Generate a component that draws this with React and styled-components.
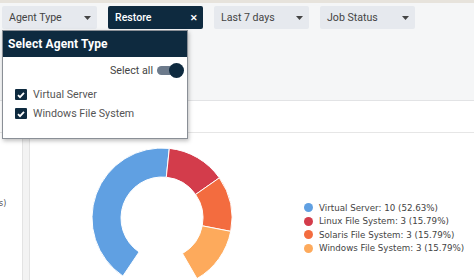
import React from 'react'
import styled, { createGlobalStyle } from 'styled-components'

const GlobalStyle = createGlobalStyle`
  html, body { margin: 0; padding: 0; background: #fff; }
  body { font-family: Roboto, "Liberation Sans", sans-serif; overflow: hidden; }
`

const agentTypes = ['Virtual Server', 'Windows File System']

const segments = [
  { label: 'Virtual Server', value: 10, pct: '52.63%', color: '#60a0e2', from: 214, to: 366 },
  { label: 'Linux File System', value: 3, pct: '15.79%', color: '#d33c4b', from: 6, to: 55 },
  { label: 'Solaris File System', value: 3, pct: '15.79%', color: '#f36c3f', from: 55, to: 101 },
  { label: 'Windows File System', value: 3, pct: '15.79%', color: '#fdaa5c', from: 101, to: 150 },
]

const pt = (cx, cy, r, deg) => {
  const a = (deg * Math.PI) / 180
  return [cx + r * Math.sin(a), cy - r * Math.cos(a)]
}

const arcPath = (cx, cy, r0, r1, a0, a1) => {
  const large = a1 - a0 > 180 ? 1 : 0
  const [x1, y1] = pt(cx, cy, r1, a0)
  const [x2, y2] = pt(cx, cy, r1, a1)
  const [x3, y3] = pt(cx, cy, r0, a1)
  const [x4, y4] = pt(cx, cy, r0, a0)
  return `M${x1} ${y1} A${r1} ${r1} 0 ${large} 1 ${x2} ${y2} L${x3} ${y3} A${r0} ${r0} 0 ${large} 0 ${x4} ${y4} Z`
}

const Caret = () => (
  <svg width="7" height="4" viewBox="0 0 7 4"><path d="M0 0h7L3.5 4z" fill="#444" /></svg>
)

const Check = () => (
  <svg width="10" height="10" viewBox="0 0 10 10">
    <path d="M2 5.2l2 2 4-4.4" stroke="#fff" strokeWidth="1.8" fill="none" />
  </svg>
)

const App = () => {
  return (
    <Page>
      <GlobalStyle />
      <TopStrip />
      <FilterBar>
        <Filter>Agent Type<Caret /></Filter>
        <Filter dark>Restore<Close>✕</Close></Filter>
        <Filter>Last 7 days<Caret /></Filter>
        <Filter>Job Status<Caret /></Filter>
      </FilterBar>
      <SubBar />
      <Content>
        <LeftCol>
          <Cut>s)</Cut>
        </LeftCol>
        <Gutter />
        <ChartArea>
          <svg width="150" height="150" viewBox="0 0 150 150">
            {segments.map((s) => (
              <path
                key={s.label}
                d={arcPath(75, 75, 41, 70, s.from, s.to)}
                fill={s.color}
                stroke="#fff"
                strokeWidth="1"
              />
            ))}
          </svg>
          <Legend>
            {segments.map((s) => (
              <LegendRow key={s.label}>
                <Dot color={s.color} />
                {s.label}: {s.value} ({s.pct})
              </LegendRow>
            ))}
          </Legend>
        </ChartArea>
      </Content>

      <Dropdown>
        <DropHeader>Select Agent Type</DropHeader>
        <DropBody>
          <SelectAll>
            Select all
            <Toggle><Knob /></Toggle>
          </SelectAll>
          {agentTypes.map((t) => (
            <Option key={t}>
              <Box><Check /></Box>
              {t}
            </Option>
          ))}
        </DropBody>
      </Dropdown>
    </Page>
  )
}

export default App

const Page = styled.div`
  position: relative;
  width: 474px;
  height: 280px;
  overflow: hidden;
`

const TopStrip = styled.div`
  height: 3px;
  background: #e7e3dc;
`

const FilterBar = styled.div`
  height: 94px;
  background: #f5f6f7;
  border-bottom: 1px solid #e2e3e5;
  display: flex;
  align-items: flex-start;
  gap: 11px;
  padding: 3px 2px 0;
`

const Filter = styled.div`
  width: 95px;
  height: 23px;
  box-sizing: border-box;
  border-radius: 2px;
  display: flex;
  align-items: center;
  justify-content: space-between;
  padding: 0 ${(p) => (p.dark ? 5 : 6)}px 0 7px;
  font-size: 10.6px;
  color: ${(p) => (p.dark ? '#fff' : '#444')};
  background: ${(p) => (p.dark ? '#0e2a3f' : '#e6e9ee')};
  font-weight: ${(p) => (p.dark ? 500 : 400)};
`

const Close = styled.span`
  font-size: 9px;
  font-weight: 700;
`

const SubBar = styled.div`
  height: 31px;
  background: #fff;
  border-bottom: 1px solid #e6e6e6;
`

const Content = styled.div`
  display: flex;
  height: 150px;
`

const LeftCol = styled.div`
  width: 22px;
  font-family: "DejaVu Sans", sans-serif;
  font-size: 8px;
  color: #555;
`

const Cut = styled.span`
  display: block;
  margin: 66px 0 0 -1px;
`

const Gutter = styled.div`
  width: 6px;
  background: #f3f3f3;
  border-left: 1px solid #e3e3e3;
  border-right: 1px solid #e3e3e3;
`

const ChartArea = styled.div`
  flex: 1;
  display: flex;
  align-items: flex-start;
  padding: 10px 0 0 57px;
  gap: 67px;
`

const Legend = styled.div`
  margin-top: 58px;
  display: flex;
  flex-direction: column;
`

const LegendRow = styled.div`
  display: flex;
  align-items: center;
  height: 13.5px;
  font-family: "DejaVu Sans", Verdana, sans-serif;
  font-size: 8.7px;
  color: #444;
  white-space: nowrap;
`

const Dot = styled.span`
  width: 9px;
  height: 9px;
  border-radius: 50%;
  background: ${(p) => p.color};
  margin-right: 6px;
`

const Dropdown = styled.div`
  position: absolute;
  top: 30px;
  left: 2px;
  width: 184px;
  background: #fff;
  border: 1px solid #8a8f96;
  box-shadow: 1px 2px 4px rgba(0, 0, 0, 0.25);
`

const DropHeader = styled.div`
  height: 26px;
  background: #0e2a3f;
  color: #fff;
  font-weight: 700;
  font-size: 12px;
  letter-spacing: 0.1px;
  display: flex;
  align-items: center;
  padding-left: 5px;
`

const DropBody = styled.div`
  padding: 7px 3px 15px 12px;
`

const SelectAll = styled.div`
  display: flex;
  justify-content: flex-end;
  align-items: center;
  gap: 4px;
  font-size: 10.7px;
  color: #444;
  margin-bottom: 8px;
`

const Toggle = styled.div`
  position: relative;
  width: 22px;
  height: 9px;
  border-radius: 5px;
  background: #6c7a8b;
  margin-right: 5px;
`

const Knob = styled.div`
  position: absolute;
  right: -5px;
  top: -3px;
  width: 15px;
  height: 15px;
  border-radius: 50%;
  background: #0e2a3f;
`

const Option = styled.div`
  display: flex;
  align-items: center;
  gap: 6px;
  height: 19px;
  font-size: 10.7px;
  color: #555;
`

const Box = styled.span`
  width: 12px;
  height: 11px;
  border-radius: 1px;
  background: #0e2a3f;
  display: flex;
  align-items: center;
  justify-content: center;
`
